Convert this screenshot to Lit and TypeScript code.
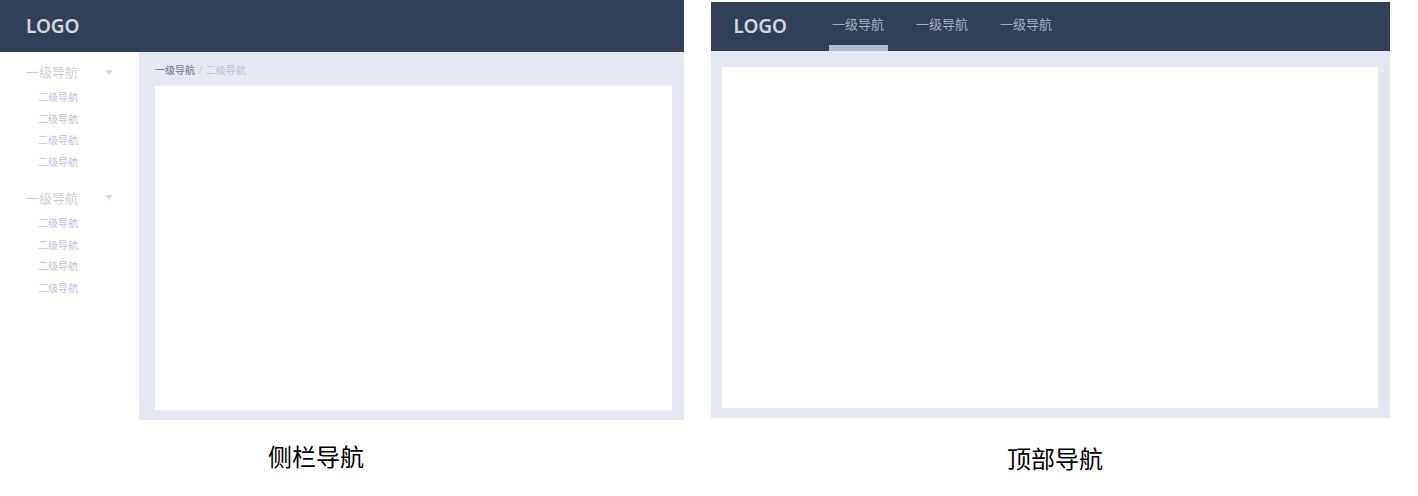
import { LitElement, html, css } from "lit";
import { customElement } from "lit/decorators.js";

const FONT = css`"Noto Sans", "Noto Sans CJK SC", "Liberation Sans", sans-serif`;

@customElement("app-root")
export class AppRoot extends LitElement {
  static styles = css`
    :host {
      display: block;
      width: 1418px;
      height: 496px;
      background: #fff;
      font-family: ${FONT};
      overflow: hidden;
    }
    .page { display: flex; align-items: flex-start; gap: 27px; }
    .col { display: flex; flex-direction: column; align-items: stretch; }
    .col.left { width: 684px; }
    .col.right { width: 679px; margin-top: 2px; }
    .panel { background: #e4e8f1; display: flex; flex-direction: column; }
    .left .panel { height: 420px; }
    .right .panel { height: 416px; }
    .head { background: #324057; display: flex; align-items: center; flex: none; }
    .left .head { height: 52px; padding: 0 0 0 26px; }
    .right .head { height: 49px; padding: 0 0 2px 22.5px; box-sizing: border-box; }
    .logo { color: #d3d6dc; font-size: 19px; font-weight: 600; line-height: 24px; width: 54px; letter-spacing: -0.1px; }
    .tabs { display: flex; align-self: stretch; margin: 0 0 -2px 41.5px; gap: 25px; }
    .tab {
      color: #a5adbd; font-size: 13px; width: 59px; padding: 1px 0 0 3px; box-sizing: border-box;
      display: flex; align-items: center; border-bottom: 6px solid transparent;
      line-height: 1;
    }
    .tab.on { border-bottom-color: #b1bcd1; }
    .body { display: flex; flex: 1; min-height: 0; }
    .side { width: 139px; background: #fff; flex: none; padding: 11px 0 0 26px; box-sizing: border-box; }
    .group { margin-bottom: 15.2px; }
    .g1 { display: flex; align-items: center; height: 18px; color: #c9cfdd; font-size: 13px; line-height: 18px; margin-bottom: 6px; }
    .caret { width: 0; height: 0; border: 4.5px solid transparent; border-top: 5px solid #d5dae4; border-bottom: 0; margin-left: 27px; }
    .g2 { color: #bcc5d8; font-size: 10px; height: 21.7px; line-height: 21.7px; padding-left: 12px; }
    .main { flex: 1; padding: 11px 12px 10px 16px; display: flex; flex-direction: column; min-width: 0; }
    .crumb { font-size: 10px; line-height: 14px; height: 23px; color: #bcc3d1; white-space: nowrap; }
    .crumb b { font-weight: 500; color: #7d8596; }
    .sep { margin: 0 3.5px; }
    .card { background: #fff; flex: 1; }
    .right .main { padding: 16px 12px 10px 11px; }
    .cap { font-size: 24px; color: #000; text-align: center; line-height: 32px; font-family: "Noto Sans CJK SC", sans-serif; font-weight: 400; }
    .left .cap { margin-top: 20px; width: 632px; }
    .right .cap { margin-top: 24px; width: 688px; }
  `;

  private side() {
    return html`<div class="group">
      <div class="g1">一级导航<span class="caret"></span></div>
      ${[0, 1, 2, 3].map(() => html`<div class="g2">二级导航</div>`)}
    </div>`;
  }

  render() {
    return html`<div class="page">
      <div class="col left">
        <div class="panel">
          <div class="head"><div class="logo">LOGO</div></div>
          <div class="body">
            <div class="side">${this.side()}${this.side()}</div>
            <div class="main">
              <div class="crumb"><b>一级导航</b><span class="sep">/</span>二级导航</div>
              <div class="card"></div>
            </div>
          </div>
        </div>
        <div class="cap">侧栏导航</div>
      </div>
      <div class="col right">
        <div class="panel">
          <div class="head">
            <div class="logo">LOGO</div>
            <div class="tabs">
              <div class="tab on">一级导航</div>
              <div class="tab">一级导航</div>
              <div class="tab">一级导航</div>
            </div>
          </div>
          <div class="main"><div class="card"></div></div>
        </div>
        <div class="cap">顶部导航</div>
      </div>
    </div>`;
  }
}
